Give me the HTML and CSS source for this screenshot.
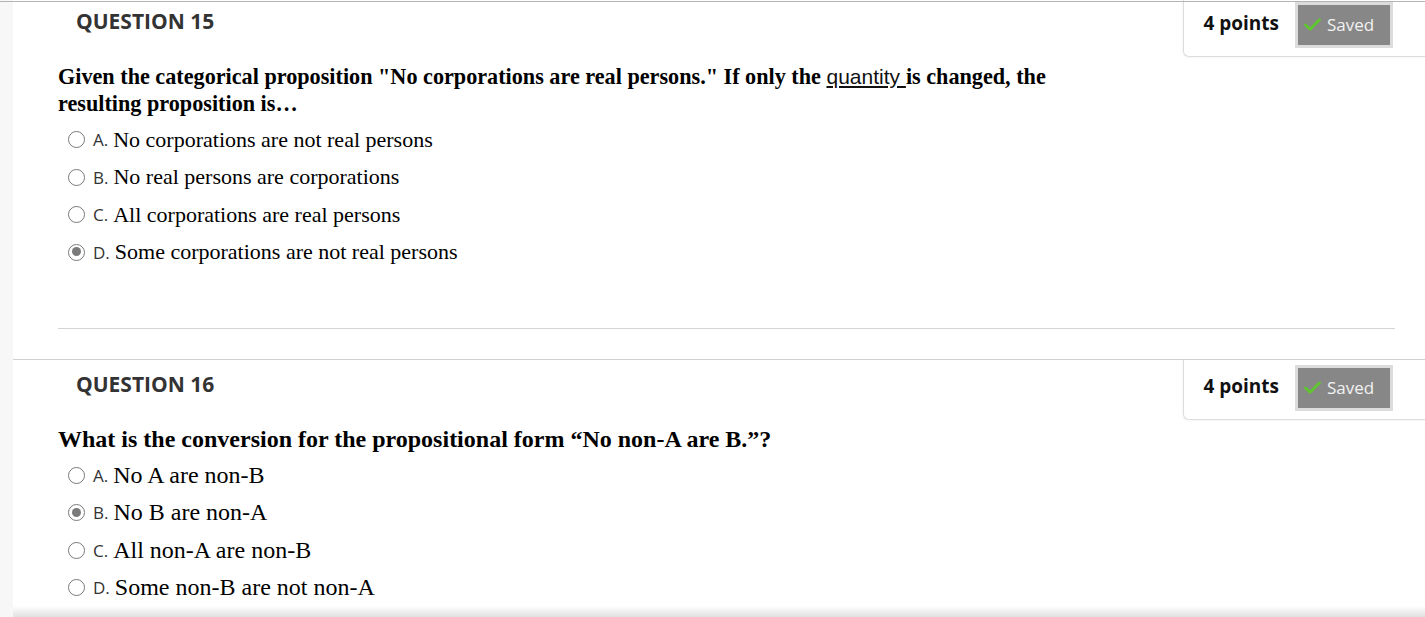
FILE: index.html
```html
<!DOCTYPE html>
<html>
<head>
<meta charset="utf-8">
<link rel="stylesheet" href="styles.css">
</head>
<body>
<div class="edge"></div>
<div class="page">
  <div class="content">
    <section class="question first">
      <div class="q-head">
        <h3 class="q-title">QUESTION 15</h3>
        <div class="points">
          <span class="pts">4 points</span>
          <span class="saved"><svg class="check" viewBox="0 0 18 14" width="17" height="13"><path d="M1.5 7.5 L6.5 12 L16.5 2" fill="none" stroke="#5fc62e" stroke-width="3" stroke-linecap="round" stroke-linejoin="round"/></svg>Saved</span>
        </div>
      </div>
      <div class="q-body">
        <p class="q-text">Given the categorical proposition "No corporations are real persons." If only the <u class="sans">quantity </u>is changed, the resulting proposition is…</p>
        <ul class="options">
          <li class="opt"><span class="radio"></span><span class="letter">A.</span><span class="otext">No corporations are not real persons</span></li>
          <li class="opt"><span class="radio"></span><span class="letter">B.</span><span class="otext">No real persons are corporations</span></li>
          <li class="opt"><span class="radio"></span><span class="letter">C.</span><span class="otext">All corporations are real persons</span></li>
          <li class="opt"><span class="radio checked"></span><span class="letter">D.</span><span class="otext">Some corporations are not real persons</span></li>
        </ul>
        <hr class="sep">
      </div>
    </section>
    <section class="question large">
      <div class="q-head">
        <h3 class="q-title">QUESTION 16</h3>
        <div class="points">
          <span class="pts">4 points</span>
          <span class="saved"><svg class="check" viewBox="0 0 18 14" width="17" height="13"><path d="M1.5 7.5 L6.5 12 L16.5 2" fill="none" stroke="#5fc62e" stroke-width="3" stroke-linecap="round" stroke-linejoin="round"/></svg>Saved</span>
        </div>
      </div>
      <div class="q-body">
        <p class="q-text">What is the conversion for the propositional form “No non-A are B.”?</p>
        <ul class="options">
          <li class="opt"><span class="radio"></span><span class="letter">A.</span><span class="otext">No A are non-B</span></li>
          <li class="opt"><span class="radio checked"></span><span class="letter">B.</span><span class="otext">No B are non-A</span></li>
          <li class="opt"><span class="radio"></span><span class="letter">C.</span><span class="otext">All non-A are non-B</span></li>
          <li class="opt"><span class="radio"></span><span class="letter">D.</span><span class="otext">Some non-B are not non-A</span></li>
        </ul>
      </div>
    </section>
    <div class="fade"></div>
  </div>
</div>
</body>
</html>
```
FILE: styles.css
```css
html, body {
  margin: 0;
  padding: 0;
  height: 617px;
  overflow: hidden;
  background: #fff;
}
body {
  font-family: "Liberation Serif", "Times New Roman", serif;
  color: #000;
}
.edge {
  position: fixed;
  top: 1px;
  left: 0;
  right: 0;
  height: 1px;
  background: #b4b4b4;
  z-index: 5;
}
.page {
  background: #f7f7f7;
  padding-left: 13px;
  min-height: 617px;
}
.content {
  background: #fff;
  min-height: 617px;
  margin-top: -4px;
}
.question {
  border-top: 1px solid #d0d0d0;
}
.question.first {
  border-top-color: transparent;
}
.q-head {
  display: flex;
  justify-content: space-between;
  align-items: flex-start;
}
.q-title {
  margin: 0;
  padding: 11px 0 0 63px;
  font-family: "Open Sans", sans-serif;
  font-weight: 700;
  font-size: 21px;
  line-height: 26px;
  color: #333;
}
.points {
  display: flex;
  align-items: center;
  gap: 16px;
  padding: 5px 32px 8px 19px;
  border-left: 1px solid #ddd;
  border-bottom: 1px solid #ddd;
  border-bottom-left-radius: 6px;
  box-shadow: -1px 1px 2px rgba(0,0,0,0.04);
}
.pts {
  font-family: "Open Sans", sans-serif;
  font-weight: 700;
  font-size: 19px;
  color: #111;
  padding-bottom: 4px;
}
.saved {
  display: flex;
  align-items: center;
  gap: 6px;
  box-sizing: border-box;
  width: 98px;
  height: 46px;
  padding-left: 6px;
  padding-bottom: 2px;
  background: #878787;
  border: 3px solid #dcdcdc;
  font-family: "Open Sans", sans-serif;
  font-size: 17px;
  color: #f2f2f2;
}
.check {
  display: block;
}
.q-body {
  padding: 0 30px 0 45px;
}
.q-text {
  margin: 6px 0 0 0;
  font-weight: 700;
  font-size: 22.2px;
  line-height: 27px;
  max-width: 1000px;
}
.large .q-text {
  font-size: 24px;
}
.sans {
  font-family: "Liberation Sans", Arial, sans-serif;
  font-weight: 400;
  font-size: 21px;
  color: #111;
}
.options {
  list-style: none;
  margin: 4px 0 0 0;
  padding: 0 0 0 10px;
}
.opt {
  display: flex;
  align-items: center;
  height: 37.5px;
}
.large .opt {
  height: 37.33px;
}
.radio {
  box-sizing: border-box;
  width: 17px;
  height: 17px;
  border: 1.5px solid #7a7a7a;
  border-radius: 50%;
  margin-right: 8px;
  position: relative;
  flex: none;
}
.radio.checked::after {
  content: "";
  position: absolute;
  left: 2.5px;
  top: 2.5px;
  width: 9px;
  height: 9px;
  border-radius: 50%;
  background: #7a7a7a;
}
.letter {
  font-family: "Open Sans", sans-serif;
  font-size: 17px;
  color: #333;
  margin-right: 5px;
}
.otext {
  font-size: 22px;
}
.large .otext {
  font-size: 24px;
}
.sep {
  margin: 57px 0 30px 0;
  border: 0;
  border-top: 1px solid #d4d4d4;
  height: 0;
}
.fade {
  height: 12px;
  margin-top: 0;
  background: linear-gradient(#fff, #dedede);
}
```
